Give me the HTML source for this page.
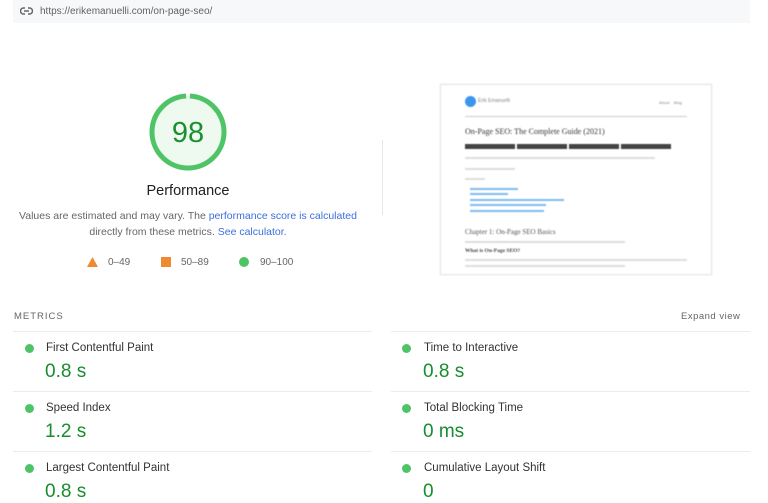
<!DOCTYPE html>
<html><head><style>
*{margin:0;padding:0;box-sizing:border-box}
body{width:768px;height:503px;background:#fff;font-family:"Liberation Sans",sans-serif;position:relative;overflow:hidden;color:#212121}
.a{position:absolute}
.url{left:13px;top:0;width:737px;height:23px;background:#f7f8f9;font-size:10px;color:#5f6368;line-height:23px;padding-left:27px}
.dot{width:9px;height:9px;border-radius:50%;background:#4fc466}
.lab{font-size:11.5px;color:#333}
.val{font-size:19px;color:#178d2e}
.ln{height:1px;background:#ececec}
.blur{filter:blur(0.4px)}
</style></head><body>
<div class="a url">https://erikemanuelli.com/on-page-seo/</div>
<svg class="a" style="left:20px;top:6px" width="13" height="10" viewBox="0 0 13 10"><path d="M5 2H3.5a3 3 0 0 0 0 6H5M8 2h1.5a3 3 0 0 1 0 6H8M4 5h5" stroke="#666" stroke-width="1.5" fill="none"/></svg>
<svg class="a" style="left:148px;top:92px" width="80" height="80" viewBox="0 0 80 80"><circle cx="40" cy="40" r="36" fill="#eefaf0"/><circle cx="40" cy="40" r="36" fill="none" stroke="#4fc466" stroke-width="5" stroke-dasharray="222 4.2" transform="rotate(-87 40 40)"/><text x="40" y="50" text-anchor="middle" font-size="29" fill="#1a8f30" font-family="Liberation Sans">98</text></svg>
<div class="a" style="left:0;width:376px;top:183px;text-align:center;font-size:14.5px;color:#212121">Performance</div>
<div class="a" style="left:0;width:376px;top:208px;text-align:center;font-size:10.5px;line-height:16px;color:#666">Values are estimated and may vary. The <span style="color:#3b6fe0">performance score is calculated</span><br>directly from these metrics. <span style="color:#3b6fe0">See calculator.</span></div>
<svg class="a" style="left:87px;top:257px" width="11" height="10"><path d="M5.5 0L11 10H0z" fill="#f08932"/></svg>
<div class="a" style="left:108px;top:257px;font-size:10px;color:#666">0–49</div>
<div class="a" style="left:161px;top:257px;width:10px;height:10px;background:#f08932"></div>
<div class="a" style="left:181px;top:257px;font-size:10px;color:#666">50–89</div>
<div class="a dot" style="left:239px;top:257px;width:10px;height:10px"></div>
<div class="a" style="left:260px;top:257px;font-size:10px;color:#666">90–100</div>
<div class="a" style="left:382px;top:140px;width:1px;height:75px;background:#e6e6e6"></div>
<div class="a blur" style="left:440px;top:84px;width:272px;height:191px;border:1px solid #e4e4e4;box-shadow:0 0 2px rgba(0,0,0,.08);background:#fff">
 <div class="a" style="left:24px;top:11px;width:11px;height:11px;border-radius:50%;background:#3b95ee"></div>
 <div class="a" style="left:37px;top:13px;font-size:5px;color:#888">Erik Emanuelli</div>
 <div class="a" style="left:218px;top:15px;font-size:4px;color:#888">About &nbsp;&nbsp; Blog</div>
 <div class="a" style="left:24px;top:31px;width:222px;height:1px;background:#ccc"></div>
 <div class="a" style="left:24px;top:42px;font-size:8px;color:#333;font-family:'Liberation Serif',serif">On-Page SEO: The Complete Guide (2021)</div>
 <div class="a" style="left:24px;top:59px;width:50px;height:5px;background:#444"></div>
 <div class="a" style="left:76px;top:59px;width:50px;height:5px;background:#444"></div>
 <div class="a" style="left:128px;top:59px;width:50px;height:5px;background:#444"></div>
 <div class="a" style="left:180px;top:59px;width:50px;height:5px;background:#444"></div>
 <div class="a" style="left:24px;top:72px;width:190px;height:2px;background:#ddd"></div>
 <div class="a" style="left:24px;top:83px;width:50px;height:2px;background:#ddd"></div>
 <div class="a" style="left:24px;top:93px;width:20px;height:2px;background:#ddd"></div>
 <div class="a" style="left:29px;top:103px;width:48px;height:2px;background:#7dbdf0"></div>
 <div class="a" style="left:29px;top:108px;width:38px;height:2px;background:#7dbdf0"></div>
 <div class="a" style="left:29px;top:114px;width:94px;height:2px;background:#7dbdf0"></div>
 <div class="a" style="left:29px;top:119px;width:76px;height:2px;background:#7dbdf0"></div>
 <div class="a" style="left:29px;top:125px;width:74px;height:2px;background:#7dbdf0"></div>
 <div class="a" style="left:24px;top:143px;font-size:7px;color:#555;font-family:'Liberation Serif',serif">Chapter 1: On-Page SEO Basics</div>
 <div class="a" style="left:24px;top:156px;width:160px;height:2px;background:#ddd"></div>
 <div class="a" style="left:24px;top:163px;font-size:5.5px;color:#444;font-family:'Liberation Serif',serif;font-weight:bold">What is On-Page SEO?</div>
 <div class="a" style="left:24px;top:174px;width:222px;height:2px;background:#ddd"></div>
 <div class="a" style="left:24px;top:180px;width:160px;height:2px;background:#ddd"></div>
</div>
<div class="a" style="left:14px;top:311px;font-size:9.5px;letter-spacing:1px;color:#666">METRICS</div>
<div class="a" style="left:681px;top:311px;font-size:9.5px;letter-spacing:.5px;color:#666">Expand view</div>
<div class="a ln" style="left:13px;top:331px;width:359px"></div>
<div class="a ln" style="left:13px;top:391px;width:359px"></div>
<div class="a ln" style="left:13px;top:451px;width:359px"></div>
<div class="a ln" style="left:391px;top:331px;width:359px"></div>
<div class="a ln" style="left:391px;top:391px;width:359px"></div>
<div class="a ln" style="left:391px;top:451px;width:359px"></div>

<div class="a dot" style="left:25px;top:344px"></div><div class="a lab" style="left:46px;top:342px">First Contentful Paint</div><div class="a val" style="left:45px;top:361px">0.8 s</div>
<div class="a dot" style="left:25px;top:404px"></div><div class="a lab" style="left:46px;top:402px">Speed Index</div><div class="a val" style="left:45px;top:421px">1.2 s</div>
<div class="a dot" style="left:25px;top:464px"></div><div class="a lab" style="left:46px;top:462px">Largest Contentful Paint</div><div class="a val" style="left:45px;top:481px">0.8 s</div>
<div class="a dot" style="left:402px;top:344px"></div><div class="a lab" style="left:424px;top:342px">Time to Interactive</div><div class="a val" style="left:423px;top:361px">0.8 s</div>
<div class="a dot" style="left:402px;top:404px"></div><div class="a lab" style="left:424px;top:402px">Total Blocking Time</div><div class="a val" style="left:423px;top:421px">0 ms</div>
<div class="a dot" style="left:402px;top:464px"></div><div class="a lab" style="left:424px;top:462px">Cumulative Layout Shift</div><div class="a val" style="left:423px;top:481px">0</div>
</body></html>
